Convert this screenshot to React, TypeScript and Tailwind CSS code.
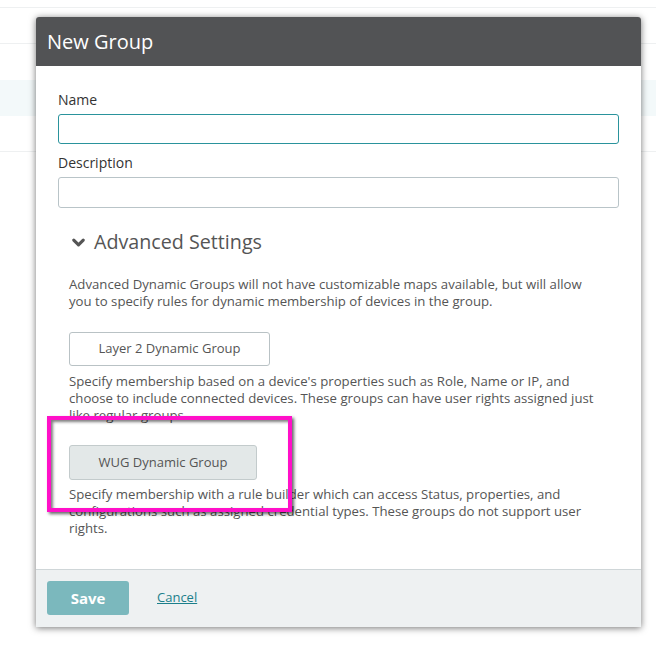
import { ChevronDown } from 'lucide-react';

const font = { fontFamily: '"Open Sans", "Noto Sans", sans-serif' };

function ChoiceBlock({ label, active, children }: { label: string; active?: boolean; children: React.ReactNode }) {
  return (
    <div className="flex flex-col items-start">
      <button
        className={
          active
            ? 'h-[35px] w-[188px] rounded-[3px] border border-[#c3cbcc] bg-[#e3e8e8] text-[13px] text-[#555]'
            : 'h-[34px] w-[201px] rounded-[3px] border border-[#b9c2c5] bg-white text-[13px] text-[#555]'
        }
      >
        {label}
      </button>
      <p className={`${active ? 'mt-[6px]' : 'mt-[7px]'} w-[530px] text-[13.2px] leading-[17px] text-[#555]`}>
        {children}
      </p>
    </div>
  );
}

export default function App() {
  return (
    <div className="relative h-[646px] w-[656px] overflow-hidden bg-white" style={font}>
      {/* page behind the dialog */}
      <div className="flex flex-col">
        <div className="h-[8px] border-b border-[#eef0f1]" />
        <div className="h-[36px] border-b border-[#eef0f1]" />
        <div className="h-[36px]" />
        <div className="h-[36px] bg-[#f3f9fa]" />
        <div className="h-[36px] border-b border-[#eef0f1]" />
      </div>

      {/* dialog */}
      <div className="absolute left-[36px] top-[17px] flex w-[605px] flex-col overflow-hidden rounded-t-[3px] bg-white shadow-[0_1px_7px_rgba(0,0,0,0.55)]">
        <div className="flex h-[49px] items-center bg-[#525355] pl-[11px] text-[20px] text-white">New Group</div>

        <div className="flex flex-col px-[22px] pt-[24px] pb-[32px]">
          <label className="text-[14px] leading-[20px] text-[#333]">Name</label>
          <input className="mt-[4px] h-[30px] rounded-[3px] border border-[#2a939c] outline-none" />
          <label className="mt-[9px] text-[14px] leading-[20px] text-[#333]">Description</label>
          <input className="mt-[4px] h-[31px] rounded-[3px] border border-[#b9c4c8] outline-none" />

          <div className="mt-[20px] flex flex-col pl-[11px]">
            <div className="flex h-[28px] items-center gap-[6px] text-[19.7px] text-[#555]">
              <ChevronDown size={19} strokeWidth={4} className="text-[#555]" />
              <span>Advanced Settings</span>
            </div>
            <p className="mt-[20px] w-[530px] text-[13.2px] leading-[17px] text-[#555]">
              Advanced Dynamic Groups will not have customizable maps available, but will allow you to specify rules for
              dynamic membership of devices in the group.
            </p>
            <div className="mt-[22px]">
              <ChoiceBlock label="Layer 2 Dynamic Group">
                Specify membership based on a device's properties such as Role, Name or IP, and choose to include connected
                devices. These groups can have user rights assigned just like regular groups.
              </ChoiceBlock>
            </div>
            <div className="mt-[21px]">
              <ChoiceBlock label="WUG Dynamic Group" active>
                Specify membership with a rule builder which can access Status, properties, and configurations such as
                assigned credential types. These groups do not support user rights.
              </ChoiceBlock>
            </div>
          </div>
        </div>

        <div className="flex h-[58px] items-start gap-[28px] border-t border-[#cfd6d8] bg-[#eef1f2] pl-[11px] pt-[11px]">
          <button className="h-[34px] w-[82px] rounded-[3px] bg-[#7bb8bd] text-[15px] font-bold text-white">Save</button>
          <a className="mt-[7px] text-[13px] text-[#1b7f8b] underline">Cancel</a>
        </div>
      </div>

      {/* highlight annotation */}
      <div className="absolute left-[47px] top-[416px] h-[96px] w-[245px] border-[4px] border-[#ff10c8] shadow-[2px_2px_3px_rgba(0,0,0,0.6),inset_2px_2px_3px_rgba(0,0,0,0.5)]" />
    </div>
  );
}
